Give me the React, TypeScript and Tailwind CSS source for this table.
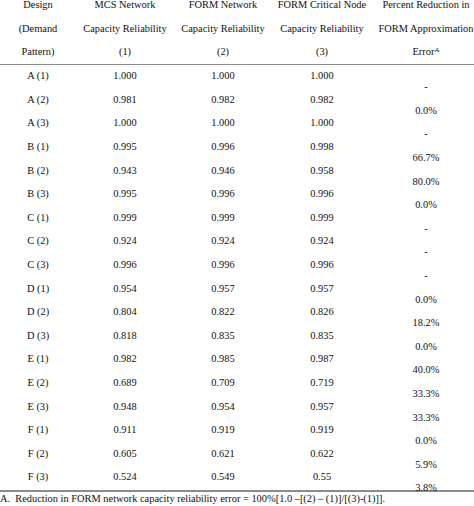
import React from "react"

const rows = [
  ["A (1)", "1.000", "1.000", "1.000"],
  ["A (2)", "0.981", "0.982", "0.982"],
  ["A (3)", "1.000", "1.000", "1.000"],
  ["B (1)", "0.995", "0.996", "0.998"],
  ["B (2)", "0.943", "0.946", "0.958"],
  ["B (3)", "0.995", "0.996", "0.996"],
  ["C (1)", "0.999", "0.999", "0.999"],
  ["C (2)", "0.924", "0.924", "0.924"],
  ["C (3)", "0.996", "0.996", "0.996"],
  ["D (1)", "0.954", "0.957", "0.957"],
  ["D (2)", "0.804", "0.822", "0.826"],
  ["D (3)", "0.818", "0.835", "0.835"],
  ["E (1)", "0.982", "0.985", "0.987"],
  ["E (2)", "0.689", "0.709", "0.719"],
  ["E (3)", "0.948", "0.954", "0.957"],
  ["F (1)", "0.911", "0.919", "0.919"],
  ["F (2)", "0.605", "0.621", "0.622"],
  ["F (3)", "0.524", "0.549", "0.55"],
]

const percents = [
  "-", "0.0%", "-", "66.7%", "80.0%", "0.0%", "-", "-", "-",
  "0.0%", "18.2%", "0.0%", "40.0%", "33.3%", "33.3%", "0.0%", "5.9%", "3.8%",
]

const headers = [
  ["Design", "(Demand", "Pattern)"],
  ["MCS Network", "Capacity Reliability", "(1)"],
  ["FORM Network", "Capacity Reliability", "(2)"],
  ["FORM Critical Node", "Capacity Reliability", "(3)"],
]

export default function App() {
  return (
    <div className="w-[474px] h-[506px] overflow-hidden bg-white font-['Liberation_Serif',serif] text-[10.4px] text-[#111]">
      <div className="-mt-[7px]">
        {/* Header */}
        <div className="grid grid-cols-[76px_98px_98px_100px_102px] leading-[23.6px]">
          {headers.map((lines, i) => (
            <div key={i} className="flex flex-col items-center whitespace-nowrap">
              {lines.map((l) => (
                <span key={l}>{l}</span>
              ))}
            </div>
          ))}
          <div className="flex flex-col items-center whitespace-nowrap pl-[6px]">
            <span>Percent Reduction in</span>
            <span>FORM Approximation</span>
            <span>
              Error<sup className="text-[7px]">A</sup>
            </span>
          </div>
        </div>

        <div className="h-[1.5px] bg-[#8c8c8c]" />

        {/* Body */}
        <div className="grid grid-cols-[76px_98px_98px_100px_102px] h-[424.8px] leading-[23.6px]">
          {[0, 1, 2, 3].map((c) => (
            <div key={c} className="flex flex-col items-center -mt-[1px]">
              {rows.map((r, i) => (
                <span key={i} className="h-[23.6px]">
                  {r[c]}
                </span>
              ))}
            </div>
          ))}
          <div className="flex flex-col items-center pl-[6px] pt-[10px] relative z-10">
            {percents.map((p, i) => (
              <span key={i} className="h-[23.6px]">
                {p}
              </span>
            ))}
          </div>
        </div>

        <div className="h-[2px] bg-[#8c8c8c]" />

        {/* Footnote */}
        <p className="leading-[14px] whitespace-pre">
          {"A.  Reduction in FORM network capacity reliability error = 100%[1.0 \u2013[(2) \u2013 (1)]/[(3)-(1)]]."}
        </p>
      </div>
    </div>
  )
}
